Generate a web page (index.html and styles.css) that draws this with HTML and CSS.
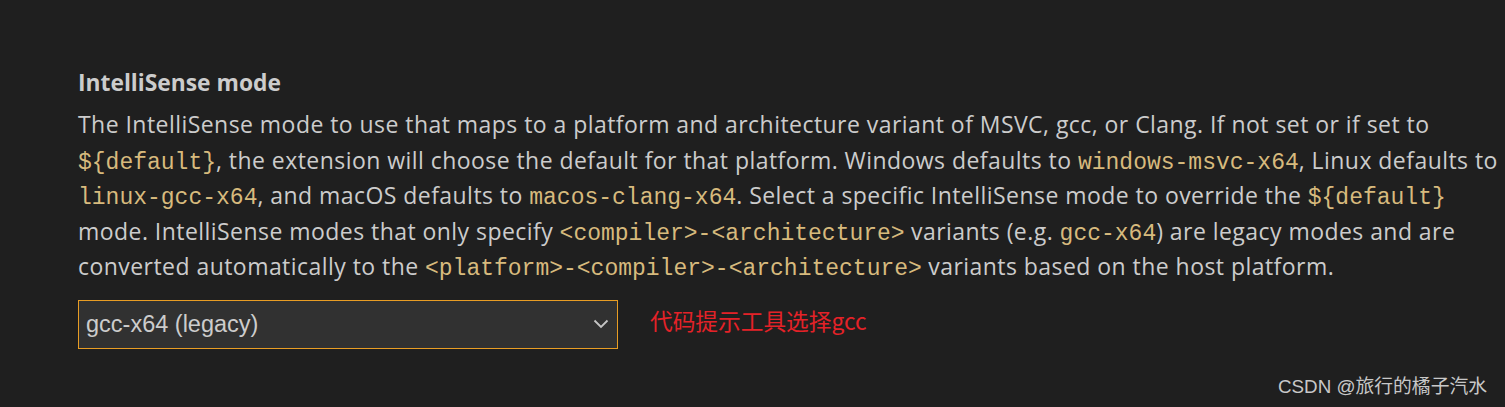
FILE: index.html
```html
<!DOCTYPE html>
<html>
<head>
<meta charset="utf-8">
<link rel="stylesheet" href="styles.css">
</head>
<body>
<div class="setting">
  <div class="title">IntelliSense mode</div>
  <div class="desc">
    <span class="line">The IntelliSense mode to use that maps to a platform and architecture variant of MSVC, gcc, or Clang. If not set or if set to</span>
    <span class="line"><code>${default}</code>, the extension will choose the default for that platform. Windows defaults to <code>windows-msvc-x64</code>, Linux defaults to</span>
    <span class="line"><code>linux-gcc-x64</code>, and macOS defaults to <code>macos-clang-x64</code>. Select a specific IntelliSense mode to override the <code>${default}</code></span>
    <span class="line">mode. IntelliSense modes that only specify <code>&lt;compiler&gt;-&lt;architecture&gt;</code> variants (e.g. <code>gcc-x64</code>) are legacy modes and are</span>
    <span class="line">converted automatically to the <code>&lt;platform&gt;-&lt;compiler&gt;-&lt;architecture&gt;</code> variants based on the host platform.</span>
  </div>
  <div class="row">
    <div class="select">
      <span class="value">gcc-x64 (legacy)</span>
      <svg class="chev" width="16" height="10" viewBox="0 0 16 10"><path d="M1.5 1.5 L8 8 L14.5 1.5" fill="none" stroke="#c5c5c5" stroke-width="1.8"/></svg>
    </div>
    <span class="note">代码提示工具选择gcc</span>
  </div>
</div>
<div class="watermark">CSDN @旅行的橘子汽水</div>
</body>
</html>
```
FILE: styles.css
```css
html, body {
  margin: 0;
  padding: 0;
  background: #1f1f1f;
  width: 1505px;
  height: 407px;
  overflow: hidden;
}
.setting {
  padding: 66px 0 0 78px;
  font-family: "Open Sans", "Noto Sans", sans-serif;
  color: #cccccc;
}
.title {
  font-size: 22.8px;
  font-weight: 700;
  line-height: 34px;
  color: #cccccc;
}
.desc {
  font-size: 23px;
  line-height: 35.6px;
  margin-top: 7px;
  letter-spacing: 0.45px;
}
.line {
  display: block;
  white-space: nowrap;
}
code {
  font-family: "Liberation Mono", "DejaVu Sans Mono", monospace;
  font-size: 23px;
  line-height: 1;
  color: #d7ba7d;
  letter-spacing: 0;
}
.row {
  display: flex;
  align-items: center;
  margin-top: 15px;
  gap: 32px;
}
.select {
  box-sizing: border-box;
  width: 540px;
  height: 49px;
  border: 1px solid #e89d24;
  background: #313131;
  display: flex;
  align-items: center;
  justify-content: space-between;
  padding: 0 8px 0 7px;
}
.value {
  font-family: "Liberation Sans", Arial, sans-serif;
  font-size: 23.5px;
  color: #cccccc;
}
.note {
  font-family: "Noto Sans CJK SC", sans-serif;
  font-size: 22.7px;
  color: #e42228;
  margin-top: -8px;
}
.watermark {
  position: absolute;
  right: 18px;
  bottom: 9px;
  font-family: "Liberation Sans", "Noto Sans CJK SC", sans-serif;
  font-size: 18.8px;
  color: #c8c8c8;
}
```
